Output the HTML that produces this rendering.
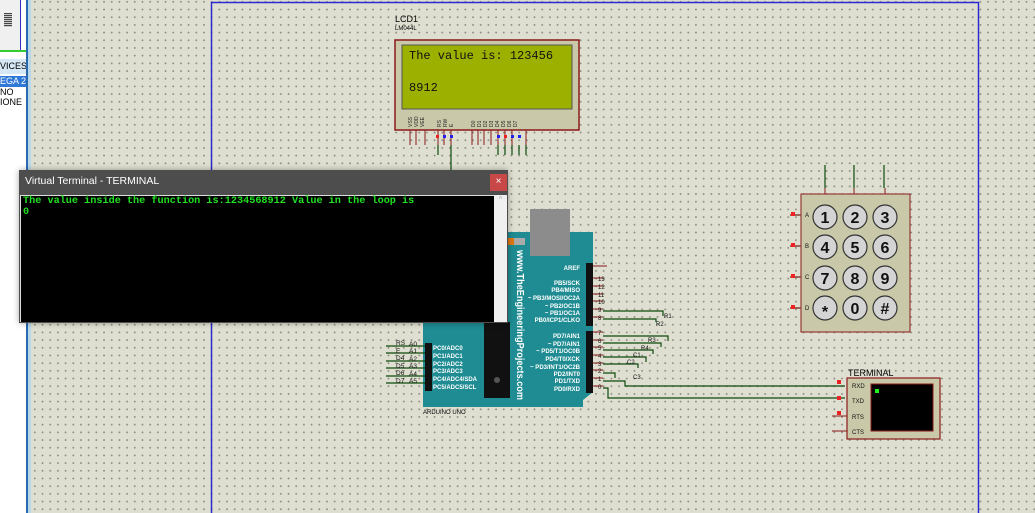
<!DOCTYPE html>
<html><head><meta charset="utf-8"><style>
html,body{margin:0;padding:0;width:1035px;height:513px;overflow:hidden;background:#fff;font-family:"Liberation Sans",sans-serif}
#canvas{position:absolute;left:31px;top:0;width:1004px;height:513px;background-color:#dfdfd1;
background-image:radial-gradient(circle,#8a8a80 0.7px,transparent 1.1px);background-size:7.7px 7.7px;background-position:0px -2px}
#left{position:absolute;left:0;top:0;width:26px;height:513px;background:#fff}
#vt{position:absolute;left:19px;top:170px;width:489px;height:153px;background:#4d4d4d;box-shadow:0 0 6px rgba(0,0,0,.35)}
</style></head><body>
<div id="left">
 <div style="position:absolute;left:0;top:0;width:20px;height:50px;background:#f0f0f0;border-right:1px solid #3030c0"></div>
 <div style="position:absolute;left:0;top:50px;width:26px;height:2px;background:#3c3"></div>
 <div style="position:absolute;left:4px;top:13px;width:8px;height:14px;background:repeating-linear-gradient(#444 0 1px,#ccc 1px 2px)"></div>
 <div style="position:absolute;left:0;top:59px;width:26px;height:15px;background:#d6e8f6;font-size:9px;line-height:15px">VICES</div>
 <div style="position:absolute;left:0;top:76px;width:26px;height:11px;background:#3078d8;color:#fff;font-size:9px;line-height:11px">EGA 2</div>
 <div style="position:absolute;left:0;top:87px;font-size:9px;line-height:10px">NO<br>IONE</div>
</div>
<div style="position:absolute;left:26px;top:0;width:2px;height:513px;background:#2a6ab0"></div>
<div style="position:absolute;left:28px;top:0;width:3px;height:513px;background:#b8d8ea"></div>
<div id="canvas"></div>
<svg style="position:absolute;left:0;top:0" width="1035" height="513" font-family="Liberation Sans,sans-serif">
 <rect x="211.5" y="2.5" width="767" height="520" fill="none" stroke="#2a2ad0" stroke-width="1.5"/>
 <!-- LCD -->
 <text x="395" y="22" font-size="9">LCD1</text>
 <text x="395" y="30" font-size="6">LM044L</text>
 <rect x="395" y="40" width="184" height="90" fill="#c9c9a9" stroke="#8b1a1a" stroke-width="1.5"/>
 <rect x="402" y="45" width="170" height="64" fill="#9cb000" stroke="#555" stroke-width="1"/>
 <text x="409" y="59" font-family="Liberation Mono,monospace" font-size="12" fill="#111">The value is: 123456</text>
 <text x="409" y="91" font-family="Liberation Mono,monospace" font-size="12" fill="#111">8912</text>
 <g font-size="5" fill="#222">
  <text transform="translate(412,127) rotate(-90)">VSS</text><text transform="translate(418,127) rotate(-90)">VDD</text><text transform="translate(424,127) rotate(-90)">VEE</text>
  <text transform="translate(441,127) rotate(-90)">RS</text><text transform="translate(447,127) rotate(-90)">RW</text><text transform="translate(453,127) rotate(-90)">E</text>
  <text transform="translate(475,127) rotate(-90)">D0</text><text transform="translate(481,127) rotate(-90)">D1</text><text transform="translate(487,127) rotate(-90)">D2</text><text transform="translate(493,127) rotate(-90)">D3</text><text transform="translate(499,127) rotate(-90)">D4</text><text transform="translate(505,127) rotate(-90)">D5</text><text transform="translate(511,127) rotate(-90)">D6</text><text transform="translate(517,127) rotate(-90)">D7</text>
 </g>
 <g stroke="#8b1a1a" stroke-width="1">
  <path d="M410 130v15M416 130v15M425 130v15M438 130v15M444 130v15M451 130v15M472 130v15M478 130v15M484 130v15M491 130v15M498 130v15M505 130v15M512 130v15M526 130v15"/>
 </g>
 <g stroke="#0b4a0b" stroke-width="1.2"><path d="M438 145v10M451 145v25M498 145v10M505 145v10M512 145v10M519 145v10M526 145v10"/></g>
 <g fill="#e22"><rect x="436" y="135" width="3" height="3"/><rect x="504" y="135" width="3" height="3"/></g>
 <g fill="#22e"><rect x="443" y="135" width="3" height="3"/><rect x="450" y="135" width="3" height="3"/><rect x="497" y="135" width="3" height="3"/><rect x="511" y="135" width="3" height="3"/><rect x="518" y="135" width="3" height="3"/></g>
 <!-- Arduino -->
 <path d="M423 322H508V232H593V392L583 400V407H423Z" fill="#1e8c92"/>
 <rect x="530" y="209" width="40" height="47" fill="#8c8c8c"/>
 <rect x="508" y="238" width="6" height="7" fill="#e07810"/><rect x="514" y="238" width="11" height="7" fill="#aaa"/>
 <rect x="484" y="322" width="26" height="76" fill="#111"/>
 <circle cx="497" cy="380" r="3" fill="#555"/>
 <text transform="translate(517,250) rotate(90)" font-size="10" font-weight="bold" fill="#fff" textLength="150" lengthAdjust="spacingAndGlyphs">www.TheEngineeringProjects.com</text>
 <rect x="586" y="263" width="7" height="63" fill="#111"/><rect x="586" y="331" width="7" height="62" fill="#111"/>
 <rect x="425" y="343" width="7" height="48" fill="#111"/>
 <g font-size="6" font-weight="bold" fill="#fff" text-anchor="end">
  <text x="580" y="270">AREF</text><text x="580" y="285">PB5/SCK</text><text x="580" y="292">PB4/MISO</text><text x="580" y="300">~ PB3/MOSI/OC2A</text><text x="580" y="308">~ PB2/OC1B</text><text x="580" y="315">~ PB1/OC1A</text><text x="580" y="322">PB0/ICP1/CLKO</text>
  <text x="580" y="338">PD7/AIN1</text><text x="580" y="346">~ PD7/AIN1</text><text x="580" y="353">~ PD5/T1/OC0B</text><text x="580" y="361">PD4/T0/XCK</text><text x="580" y="369">~ PD3/INT1/OC2B</text><text x="580" y="376">PD2/INT0</text><text x="580" y="383">PD1/TXD</text><text x="580" y="391">PD0/RXD</text>
 </g>
 <g font-size="6" font-weight="bold" fill="#fff">
  <text x="433" y="350">PC0/ADC0</text><text x="433" y="358">PC1/ADC1</text><text x="433" y="366">PC2/ADC2</text><text x="433" y="373">PC3/ADC3</text><text x="433" y="381">PC4/ADC4/SDA</text><text x="433" y="389">PC5/ADC5/SCL</text>
 </g>
 <text x="423" y="414" font-size="6">ARDUINO UNO</text>
 <g stroke="#8b1a1a" stroke-width="1"><path d="M593 266h14M593 278h10M593 286h10M593 294h10M593 301h10M593 309h10M593 317h10M593 332h10M593 340h10M593 347h10M593 355h10M593 363h10M593 370h10M593 378h10M593 386h10"/></g>
 <g font-size="6" fill="#111"><text x="598" y="281">13</text><text x="598" y="289">12</text><text x="598" y="297">11</text><text x="598" y="304">10</text><text x="598" y="312">9</text><text x="598" y="320">8</text><text x="598" y="335">7</text><text x="598" y="343">6</text><text x="598" y="350">5</text><text x="598" y="358">4</text><text x="598" y="366">3</text><text x="598" y="373">2</text><text x="598" y="381">1</text><text x="598" y="389">0</text></g>
 <g stroke="#0b4a0b" stroke-width="1.2" fill="none">
  <path d="M603 311h60v5M603 319h53v3M603 336h65v5M603 343h58v4M603 350h50v4M603 357h43v5M603 364h35v4M603 373h12v5M603 381h22v5h220M603 388h5v10h237"/>
  <path d="M386 346h39M386 353h39M386 361h39M386 368h39M386 376h39M386 383h39"/>
  <path d="M790 215h10M790 246h10M790 277h10M790 308h10M825 165v23M854 165v23M884 165v23"/>
 </g>
 <g font-size="6" fill="#111"><text x="664" y="318">R1</text><text x="656" y="326">R2</text><text x="648" y="342">R3</text><text x="641" y="350">R4</text><text x="633" y="357">C1</text><text x="627" y="364">C2</text><text x="633" y="379">C3</text></g>
 <g font-size="6.5" fill="#111"><text x="396" y="345">RS</text><text x="396" y="353">E</text><text x="396" y="360">D4</text><text x="396" y="368">D5</text><text x="396" y="375">D6</text><text x="396" y="383">D7</text>
 <text x="409" y="346">A0</text><text x="409" y="353">A1</text><text x="409" y="361">A2</text><text x="409" y="368">A3</text><text x="409" y="376">A4</text><text x="409" y="383">A5</text></g>
 <!-- keypad -->
 <rect x="801" y="194" width="109" height="138" fill="#c9c9a9" stroke="#8b1a1a" stroke-width="1"/>
 <g stroke="#8b1a1a"><path d="M825 188v6M854 188v6M885 188v6M790 215h11M790 246h11M790 277h11M790 308h11"/></g>
 <g font-size="6" fill="#111"><text x="805" y="217">A</text><text x="805" y="248">B</text><text x="805" y="279">C</text><text x="805" y="310">D</text></g>
 <g fill="#d4d4d4" stroke="#333" stroke-width="1.2">
  <circle cx="825" cy="217" r="12"/><circle cx="855" cy="217" r="12"/><circle cx="885" cy="217" r="12"/>
  <circle cx="825" cy="247" r="12"/><circle cx="855" cy="247" r="12"/><circle cx="885" cy="247" r="12"/>
  <circle cx="825" cy="278" r="12"/><circle cx="855" cy="278" r="12"/><circle cx="885" cy="278" r="12"/>
  <circle cx="825" cy="308" r="12"/><circle cx="855" cy="308" r="12"/><circle cx="885" cy="308" r="12"/>
 </g>
 <g font-size="16" font-weight="bold" fill="#111" text-anchor="middle">
  <text x="825" y="223">1</text><text x="855" y="223">2</text><text x="885" y="223">3</text>
  <text x="825" y="253">4</text><text x="855" y="253">5</text><text x="885" y="253">6</text>
  <text x="825" y="284">7</text><text x="855" y="284">8</text><text x="885" y="284">9</text>
  <text x="825" y="317">*</text><text x="855" y="314">0</text><text x="885" y="314">#</text>
 </g>
 <g fill="#e22"><rect x="791" y="212" width="4" height="4"/><rect x="791" y="243" width="4" height="4"/><rect x="791" y="274" width="4" height="4"/><rect x="791" y="305" width="4" height="4"/><rect x="837" y="380" width="4" height="4"/><rect x="837" y="396" width="4" height="4"/><rect x="837" y="411" width="4" height="4"/></g>
 <!-- terminal comp -->
 <text x="848" y="376" font-size="9">TERMINAL</text>
 <rect x="847" y="378" width="93" height="61" fill="#c9c9a9" stroke="#8b1a1a" stroke-width="1.2"/>
 <rect x="871" y="384" width="62" height="47" fill="#000" stroke="#8b1a1a"/>
 <rect x="875" y="389" width="4" height="4" fill="#2e2"/>
 <g font-size="6" fill="#111"><text x="852" y="388">RXD</text><text x="852" y="403">TXD</text><text x="852" y="419">RTS</text><text x="852" y="434">CTS</text></g>
 <g stroke="#8b1a1a"><path d="M832 416h15M832 431h15"/></g>
</svg>
<div id="vt">
 <div style="position:absolute;left:6px;top:5px;color:#fff;font-size:10.5px">Virtual Terminal - TERMINAL</div>
 <div style="position:absolute;left:471px;top:4px;width:17px;height:17px;background:#c84848;color:#fff;font-size:10px;text-align:center;line-height:16px">×</div>
 <div style="position:absolute;left:1px;top:25px;width:474px;height:126px;background:#000;border-top:1px solid #ddd;border-left:1px solid #ddd"></div>
 <div style="position:absolute;left:475px;top:25px;width:13px;height:127px;background:#f0f0f0;color:#aaa;font-size:8px;text-align:center">^</div>
 <div style="position:absolute;left:4px;top:26px;color:#21e021;font-family:'Liberation Mono',monospace;font-size:10.2px;font-weight:bold;line-height:11px;white-space:pre">The value inside the function is:1234568912 Value in the loop is
0</div>
</div>
</body></html>
